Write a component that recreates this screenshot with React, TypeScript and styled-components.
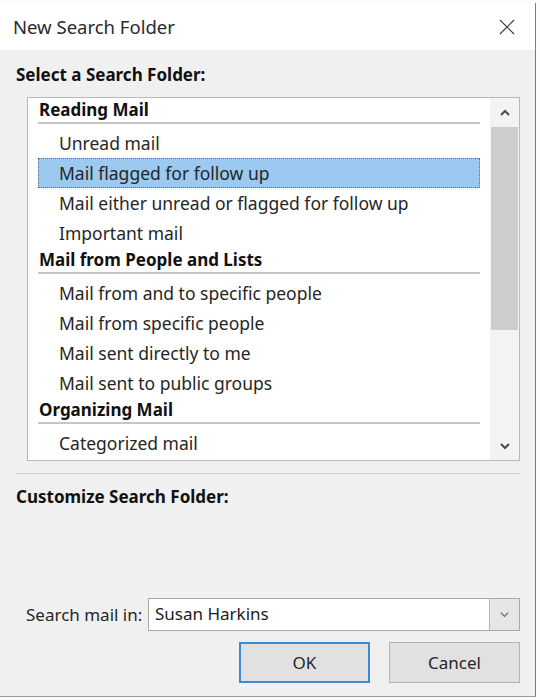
import { FC } from 'react';
import styled, { createGlobalStyle } from 'styled-components';

const GlobalStyle = createGlobalStyle`
    body {
        margin: 0;
        background: #fbfbfb;
        font-family: 'Noto Sans', 'Open Sans', sans-serif;
        color: #1b1b1b;
    }
`;

type Group = {
    title: string;
    items: string[];
};

const groups: Group[] = [
    {
        title: 'Reading Mail',
        items: [
            'Unread mail',
            'Mail flagged for follow up',
            'Mail either unread or flagged for follow up',
            'Important mail',
        ],
    },
    {
        title: 'Mail from People and Lists',
        items: [
            'Mail from and to specific people',
            'Mail from specific people',
            'Mail sent directly to me',
            'Mail sent to public groups',
        ],
    },
    {
        title: 'Organizing Mail',
        items: ['Categorized mail'],
    },
];

const Backdrop = styled.div`
    width: 540px;
    height: 700px;
    padding-top: 3px;
    box-sizing: border-box;
    overflow: hidden;
`;

const Dialog = styled.div`
    width: 536px;
    height: 694px;
    box-sizing: border-box;
    background: #f0f0f0;
    border-right: 1px solid #7a7a7a;
    border-bottom: 1px solid #9a9a9a;
    display: flex;
    flex-direction: column;
`;

const TitleBar = styled.div`
    height: 47px;
    flex: none;
    background: #ffffff;
    display: flex;
    align-items: center;
    justify-content: space-between;
    padding: 0 16px 0 13px;
`;

const Title = styled.div`
    font-size: 18.5px;
    color: #2a2a2a;
    padding-bottom: 1px;
`;

const CloseButton = styled.div`
    width: 24px;
    height: 24px;
    display: flex;
    align-items: center;
    justify-content: center;
`;

const Body = styled.div`
    flex: 1;
    display: flex;
    flex-direction: column;
    padding: 0 15px 0 16px;
`;

const SectionLabel = styled.div<{ $top: number }>`
    margin-top: ${(p) => p.$top}px;
    font-size: 17px;
    font-weight: 700;
    line-height: 20px;
    color: #111;
`;

const ListBox = styled.div`
    margin: 12px 0 0 11px;
    height: 364px;
    box-sizing: border-box;
    border: 1px solid #b9b9b9;
    background: #ffffff;
    display: flex;
`;

const ListContent = styled.div`
    flex: 1;
    overflow: hidden;
    padding: 0 10px;
`;

const GroupHeader = styled.div`
    height: 24px;
    line-height: 24px;
    margin-bottom: 4px;
    padding-left: 1px;
    border-bottom: 2px solid #c6c6c6;
    font-size: 17px;
    font-weight: 700;
    color: #111;
`;

const Item = styled.div<{ $selected?: boolean }>`
    height: 30px;
    line-height: 28px;
    box-sizing: border-box;
    padding-left: 20px;
    font-size: 17.5px;
    color: #262626;
    white-space: nowrap;
    background: ${(p) => (p.$selected ? '#9bc9ef' : 'transparent')};
    border: 1px ${(p) => (p.$selected ? 'dotted #5a6b7a' : 'solid transparent')};
`;

const ScrollBar = styled.div`
    width: 29px;
    flex: none;
    background: #f3f3f3;
    display: flex;
    flex-direction: column;
    align-items: center;
`;

const ScrollArrow = styled.div`
    height: 29px;
    width: 100%;
    display: flex;
    align-items: center;
    justify-content: center;
    flex: none;
`;

const ScrollTrack = styled.div`
    flex: 1;
    width: 100%;
    padding: 0 1px 0 1px;
    box-sizing: border-box;
`;

const Thumb = styled.div`
    height: 203px;
    background: #cdcdcd;
`;

const Separator = styled.div`
    margin-top: 12px;
    height: 1px;
    background: #cfcfcf;
`;

const Spacer = styled.div`
    flex: 1;
`;

const SearchRow = styled.div`
    display: flex;
    align-items: center;
    padding-left: 10px;
`;

const RowLabel = styled.div`
    font-size: 17px;
    color: #262626;
    width: 122px;
`;

const Combo = styled.div`
    flex: 1;
    height: 33px;
    box-sizing: border-box;
    border: 1px solid #a9a9a9;
    background: #ffffff;
    display: flex;
    align-items: stretch;
`;

const ComboText = styled.div`
    flex: 1;
    padding-left: 6px;
    line-height: 30px;
    font-size: 17px;
    color: #1b1b1b;
`;

const ComboButton = styled.div`
    width: 29px;
    background: #e6e6e6;
    border-left: 1px solid #b4b4b4;
    display: flex;
    align-items: center;
    justify-content: center;
`;

const ButtonRow = styled.div`
    display: flex;
    justify-content: flex-end;
    gap: 19px;
    margin: 11px 0 13px 0;
`;

const Button = styled.div<{ $primary?: boolean }>`
    width: 131px;
    height: 41px;
    box-sizing: border-box;
    background: #e1e1e1;
    border: ${(p) => (p.$primary ? '2px solid #3c8ad0' : '1px solid #b3b3b3')};
    display: flex;
    align-items: center;
    justify-content: center;
    font-size: 17px;
    color: #262626;
`;

const Chevron: FC<{ up?: boolean; color: string; size: number; stroke: number }> = ({
    up,
    color,
    size,
    stroke,
}) => (
    <svg width={size} height={size} viewBox="0 0 12 12">
        <path
            d={up ? 'M2 8 L6 4 L10 8' : 'M2 4 L6 8 L10 4'}
            fill="none"
            stroke={color}
            strokeWidth={stroke}
        />
    </svg>
);

export default function App() {
    return (
        <Backdrop>
            <GlobalStyle />
            <Dialog>
                <TitleBar>
                    <Title>New Search Folder</Title>
                    <CloseButton>
                        <svg width="16" height="16" viewBox="0 0 16 16">
                            <path d="M1 1 L15 15 M15 1 L1 15" stroke="#3a3a3a" strokeWidth="1.1" />
                        </svg>
                    </CloseButton>
                </TitleBar>
                <Body>
                    <SectionLabel $top={15}>Select a Search Folder:</SectionLabel>
                    <ListBox>
                        <ListContent>
                            {groups.map((g) => (
                                <div key={g.title}>
                                    <GroupHeader>{g.title}</GroupHeader>
                                    {g.items.map((it) => (
                                        <Item key={it} $selected={it === 'Mail flagged for follow up'}>
                                            {it}
                                        </Item>
                                    ))}
                                </div>
                            ))}
                        </ListContent>
                        <ScrollBar>
                            <ScrollArrow>
                                <Chevron up color="#4a4a4a" size={12} stroke={2} />
                            </ScrollArrow>
                            <ScrollTrack>
                                <Thumb />
                            </ScrollTrack>
                            <ScrollArrow>
                                <Chevron color="#4a4a4a" size={12} stroke={2} />
                            </ScrollArrow>
                        </ScrollBar>
                    </ListBox>
                    <Separator />
                    <SectionLabel $top={13}>Customize Search Folder:</SectionLabel>
                    <Spacer />
                    <SearchRow>
                        <RowLabel>Search mail in:</RowLabel>
                        <Combo>
                            <ComboText>Susan Harkins</ComboText>
                            <ComboButton>
                                <Chevron color="#6a6a6a" size={11} stroke={1.4} />
                            </ComboButton>
                        </Combo>
                    </SearchRow>
                    <ButtonRow>
                        <Button $primary>OK</Button>
                        <Button>Cancel</Button>
                    </ButtonRow>
                </Body>
            </Dialog>
        </Backdrop>
    );
}
